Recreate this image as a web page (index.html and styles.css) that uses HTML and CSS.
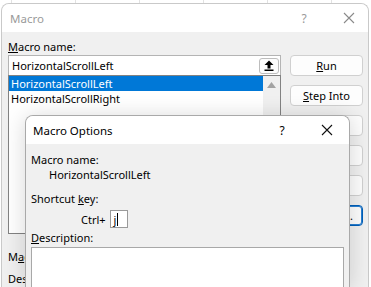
FILE: index.html
```html
<!DOCTYPE html>
<html>
<head>
<meta charset="utf-8">
<link rel="stylesheet" href="styles.css">
</head>
<body>
<div class="sheet">
  <div class="dlg">
    <div class="tbar">
      <span class="ttl">Macro</span>
      <span class="help">?</span>
      <span class="close"><svg width="12" height="12" viewBox="0 0 12 12"><path d="M1 1L11 11M11 1L1 11" stroke="#8a8a8a" stroke-width="1.1" fill="none"/></svg></span>
    </div>
    <div class="dbody">
      <div class="leftcol">
        <div class="lbl"><u>M</u>acro name:</div>
        <div class="field">
          <span class="ftext">HorizontalScrollLeft</span>
          <span class="upbtn"><svg width="10" height="11" viewBox="0 0 10 11"><path d="M5 0.5L9.5 5H6.5V8.5H3.5V5H0.5Z" fill="#000"/><rect x="0.5" y="9.5" width="9" height="1.5" fill="#000"/></svg></span>
        </div>
        <div class="list">
          <div class="items">
            <div class="item sel">HorizontalScrollLeft</div>
            <div class="item">HorizontalScrollRight</div>
          </div>
          <div class="vscroll"><svg width="9" height="6" viewBox="0 0 9 6"><path d="M4.5 0L9 6H0Z" fill="#a3a3a3"/></svg></div>
        </div>
        <div class="lbl2">M<u>a</u>cros in:</div>
        <div class="lbl3">Description</div>
      </div>
      <div class="btncol">
        <div class="btn"><u>R</u>un</div>
        <div class="btn"><u>S</u>tep Into</div>
        <div class="btn"><u>E</u>dit</div>
        <div class="btn">Cr<u>e</u>ate</div>
        <div class="btn"><u>D</u>elete</div>
        <div class="btn focus"><u>O</u>ptions...</div>
      </div>
    </div>
  </div>
  <div class="opts">
    <div class="otbar">
      <span class="ottl">Macro Options</span>
      <span class="ohelp">?</span>
      <span class="oclose"><svg width="12" height="12" viewBox="0 0 12 12"><path d="M1 1L11 11M11 1L1 11" stroke="#111" stroke-width="1.1" fill="none"/></svg></span>
    </div>
    <div class="obody">
      <div class="oline">Macro name:</div>
      <div class="oline ovalue">HorizontalScrollLeft</div>
      <div class="oline oshort">Shortcut <u>k</u>ey:</div>
      <div class="orow">
        <span>Ctrl+</span>
        <span class="keybox">j<span class="caret"></span></span>
      </div>
      <div class="oline odesc"><u>D</u>escription:</div>
      <div class="otext"></div>
    </div>
  </div>
</div>
</body>
</html>
```

FILE: styles.css
```css
* { box-sizing: border-box; }
html, body { margin: 0; padding: 0; }
body {
  width: 371px;
  height: 287px;
  overflow: hidden;
  font-family: "Noto Sans", "Open Sans", sans-serif;
  font-size: 11px;
  color: #000;
  background-color: #fff;
  background-image: linear-gradient(to right, #e2e2e2 1px, transparent 1px);
  background-size: 64px 100%;
  background-position: 11px 0;
}
.sheet {
  position: relative;
  width: 371px;
  height: 287px;
  overflow: hidden;
  padding-top: 3px;
  padding-left: 1px;
}
u { text-decoration: underline; text-underline-offset: 1px; }

.dlg {
  width: 368px;
  height: 284px;
  border: 1px solid #c9c9c9;
  border-bottom: none;
  border-radius: 8px 8px 0 0;
  overflow: hidden;
  background: #f0f0f0;
}
.tbar {
  height: 28px;
  background: #fff;
  display: flex;
  align-items: center;
}
.ttl {
  flex: 1;
  padding-left: 8px;
  color: #9a9a9a;
  font-size: 11.5px;
}
.help {
  width: 20px;
  text-align: center;
  color: #9a9a9a;
  font-size: 12px;
  margin-right: 16px;
}
.close {
  width: 38px;
  display: flex;
  justify-content: center;
}
.dbody {
  display: flex;
  gap: 9px;
  padding: 0 4px 0 6px;
}
.leftcol {
  width: 273px;
  padding-top: 7px;
}
.lbl { line-height: 15px; margin-bottom: 1px; }
.field {
  height: 20px;
  background: #fff;
  border: 1px solid #b4b4b4;
  border-bottom: none;
  display: flex;
  align-items: center;
}
.ftext { padding-left: 3px; }
.upbtn {
  margin-left: auto;
  margin-right: 1px;
  width: 20px;
  height: 16px;
  border: 1px solid #bdbdbd;
  border-radius: 3px;
  background: #fdfdfd;
  display: flex;
  align-items: center;
  justify-content: center;
}
.list {
  height: 159px;
  border: 1px solid #828282;
  background: #fff;
  display: flex;
}
.items { flex: 1; }
.item {
  height: 15px;
  line-height: 15px;
  padding-left: 2px;
}
.item.sel { background: #0078d7; color: #fff; }
.vscroll {
  width: 17px;
  background: #f0f0f0;
  display: flex;
  justify-content: center;
  padding-top: 6px;
  align-items: flex-start;
}
.lbl2 { line-height: 15px; margin-top: 15px; }
.lbl3 { line-height: 15px; margin-top: 7px; }

.btncol {
  width: 73px;
  padding-top: 23px;
  display: flex;
  flex-direction: column;
  gap: 9px;
}
.btn {
  height: 21px;
  border: 1px solid #d0d0d0;
  border-radius: 4px;
  background: #fdfdfd;
  display: flex;
  align-items: center;
  justify-content: center;
}
.btn.focus {
  border: 1px solid #005fb8;
  box-shadow: inset 0 0 0 1px #2a7fd0;
  padding-left: 3px;
}

.opts {
  position: absolute;
  left: 25px;
  top: 115px;
  width: 325px;
  height: 172px;
  border: 1px solid #a9a9a9;
  border-bottom: none;
  border-radius: 8px 8px 0 0;
  overflow: hidden;
  background: #f0f0f0;
  box-shadow: 0 2px 22px rgba(0,0,0,0.16);
}
.otbar {
  height: 28px;
  background: #fff;
  display: flex;
  align-items: center;
}
.ottl {
  flex: 1;
  padding-left: 7px;
  font-size: 11.5px;
}
.ohelp {
  width: 20px;
  text-align: center;
  font-size: 12px;
  margin-right: 13px;
}
.oclose {
  width: 44px;
  display: flex;
  justify-content: center;
}
.obody { padding: 8px 5px 0 5px; }
.oline { line-height: 15px; }
.ovalue { padding-left: 18px; }
.oshort { margin-top: 9px; }
.orow {
  margin-top: 4px;
  padding-left: 50px;
  display: flex;
  align-items: center;
  gap: 4px;
}
.keybox {
  width: 18px;
  height: 18px;
  border: 1px solid #9a9a9a;
  background: #fff;
  display: flex;
  align-items: center;
  padding-left: 3px;
}
.caret {
  display: inline-block;
  width: 1px;
  height: 13px;
  background: #000;
  margin-left: 1px;
}
.odesc { margin-top: 2px; }
.otext {
  margin-top: 2px;
  height: 60px;
  border: 1px solid #a8a8a8;
  background: #fff;
}
```
